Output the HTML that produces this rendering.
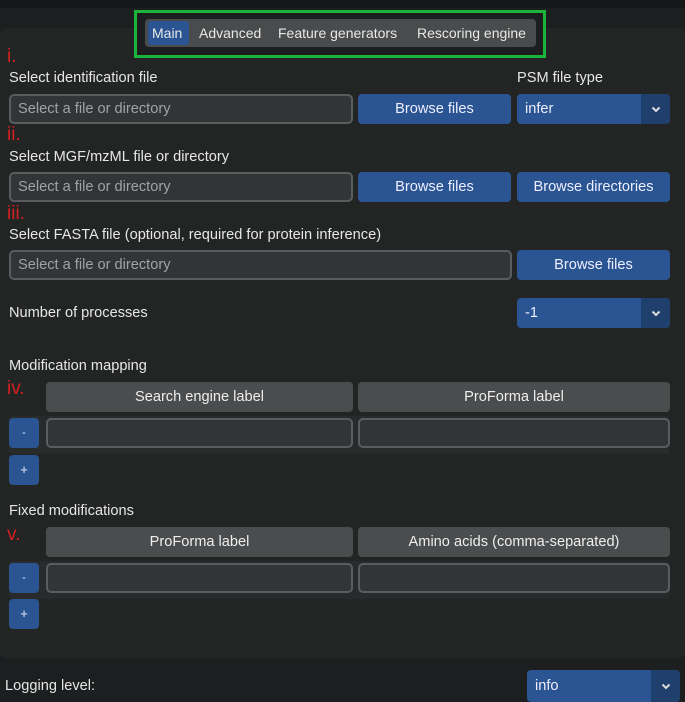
<!DOCTYPE html>
<html><head><meta charset="utf-8"><style>
*{box-sizing:border-box;margin:0;padding:0}
body{width:685px;height:701px;background:#1c1e1f;font-family:"Liberation Sans",sans-serif;color:#e6e6e6;font-size:14px;position:relative;overflow:hidden}
.a{position:absolute}
.strip{left:0;top:0;width:685px;height:8px;background:#161718}
.panel{left:0;top:28px;width:685px;height:630px;background:#232525;border-radius:6px}
.green{left:134px;top:10px;width:412px;height:48px;border:3px solid #1db43c;background:#1c1e1f}
.tabs{left:145px;top:19px;width:391px;height:28px;background:#4a4b4c;border-radius:4px}
.tab{top:21px;height:24px;line-height:24px;font-size:14px;color:#e8e8e8}
.red{color:#d42020;font-size:19px;left:7px}
.lbl{font-size:14.6px;color:#e6e6e6;left:9px}
.inp{background:#323536;border:2px solid #5a5d60;border-radius:5px;color:#a0a3a6;padding-left:7px;font-size:14.6px}
.btn{background:#2a5592;border-radius:4px;color:#eef;text-align:center;font-size:14.6px}
.sel{background:#2a5592;border-radius:4px;color:#eef;padding-left:8px;font-size:14.6px}
.chev{position:absolute;right:0;top:0;width:29px;height:100%;background:#1f3f6d;border-radius:0 4px 4px 0;display:flex;align-items:center;justify-content:center}
.hdr{background:#4a4c4d;border-radius:4px;text-align:center;color:#eee;font-size:14.6px}
.rowbg{background:#282a2b;border-radius:4px}
</style></head><body>
<div class="a strip"></div>
<div class="a panel"></div>
<div class="a green"></div>
<div class="a tabs"></div>
<div class="a" style="left:148px;top:21px;width:41px;height:24px;background:#2a5592;border-radius:3px"></div>
<div class="a tab" style="left:152px">Main</div>
<div class="a tab" style="left:199px">Advanced</div>
<div class="a tab" style="left:278px">Feature generators</div>
<div class="a tab" style="left:417px">Rescoring engine</div>

<div class="a red" style="top:46px">i.</div>
<div class="a lbl" style="top:70px">Select identification file</div>
<div class="a lbl" style="left:517px;top:70px">PSM file type</div>
<div class="a inp" style="left:9px;top:94px;width:344px;height:30px;line-height:26px">Select a file or directory</div>
<div class="a btn" style="left:358px;top:94px;width:153px;height:30px;line-height:30px">Browse files</div>
<div class="a sel" style="left:517px;top:94px;width:153px;height:30px;line-height:30px">infer<span class="chev"><svg width="10" height="7" viewBox="0 0 10 7"><path d="M1.5 1.5L5 5L8.5 1.5" stroke="#ddd" stroke-width="2" fill="none"/></svg></span></div>

<div class="a red" style="top:124px">ii.</div>
<div class="a lbl" style="top:149px">Select MGF/mzML file or directory</div>
<div class="a inp" style="left:9px;top:172px;width:344px;height:30px;line-height:26px">Select a file or directory</div>
<div class="a btn" style="left:358px;top:172px;width:153px;height:30px;line-height:30px">Browse files</div>
<div class="a btn" style="left:517px;top:172px;width:153px;height:30px;line-height:30px">Browse directories</div>

<div class="a red" style="top:203px">iii.</div>
<div class="a lbl" style="top:227px">Select FASTA file (optional, required for protein inference)</div>
<div class="a inp" style="left:9px;top:250px;width:503px;height:30px;line-height:26px">Select a file or directory</div>
<div class="a btn" style="left:517px;top:250px;width:153px;height:30px;line-height:30px">Browse files</div>

<div class="a lbl" style="top:305px">Number of processes</div>
<div class="a sel" style="left:517px;top:298px;width:153px;height:30px;line-height:30px">-1<span class="chev"><svg width="10" height="7" viewBox="0 0 10 7"><path d="M1.5 1.5L5 5L8.5 1.5" stroke="#ddd" stroke-width="2" fill="none"/></svg></span></div>

<div class="a lbl" style="top:358px">Modification mapping</div>
<div class="a red" style="top:378px">iv.</div>
<div class="a hdr" style="left:46px;top:382px;width:307px;height:30px;line-height:30px">Search engine label</div>
<div class="a hdr" style="left:358px;top:382px;width:312px;height:30px;line-height:30px">ProForma label</div>
<div class="a rowbg" style="left:9px;top:416px;width:661px;height:38px"></div>
<div class="a btn" style="left:9px;top:418px;width:30px;height:30px;line-height:30px;font-size:11px">-</div>
<div class="a inp" style="left:46px;top:418px;width:307px;height:30px"></div>
<div class="a inp" style="left:358px;top:418px;width:312px;height:30px"></div>
<div class="a btn" style="left:9px;top:455px;width:30px;height:30px;line-height:30px;font-size:13px">+</div>

<div class="a lbl" style="top:503px">Fixed modifications</div>
<div class="a red" style="top:524px">v.</div>
<div class="a hdr" style="left:46px;top:527px;width:307px;height:30px;line-height:30px">ProForma label</div>
<div class="a hdr" style="left:358px;top:527px;width:312px;height:30px;line-height:30px">Amino acids (comma-separated)</div>
<div class="a rowbg" style="left:9px;top:561px;width:661px;height:38px"></div>
<div class="a btn" style="left:9px;top:563px;width:30px;height:30px;line-height:30px;font-size:11px">-</div>
<div class="a inp" style="left:46px;top:563px;width:307px;height:30px"></div>
<div class="a inp" style="left:358px;top:563px;width:312px;height:30px"></div>
<div class="a btn" style="left:9px;top:599px;width:30px;height:30px;line-height:30px;font-size:13px">+</div>

<div class="a lbl" style="left:5px;top:678px">Logging level:</div>
<div class="a sel" style="left:527px;top:670px;width:153px;height:32px;line-height:32px">info<span class="chev"><svg width="10" height="7" viewBox="0 0 10 7"><path d="M1.5 1.5L5 5L8.5 1.5" stroke="#ddd" stroke-width="2" fill="none"/></svg></span></div>
</body></html>
